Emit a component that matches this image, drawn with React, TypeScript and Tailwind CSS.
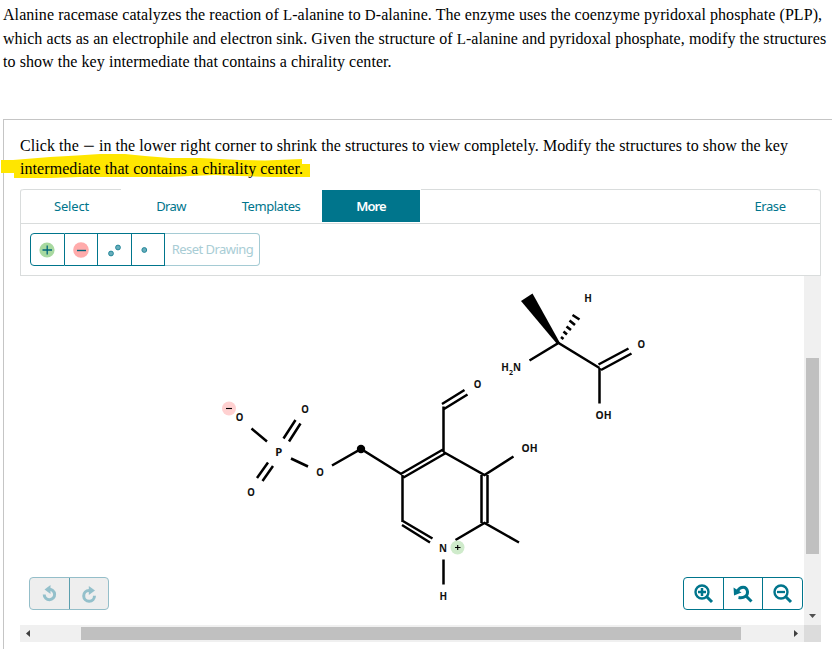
import React from "react";

const tabs = [
  { name: "Select", box: "w-[100px]", tone: "text-[#00758c] border-t border-[#d9dcdc] tracking-[-0.15px] rounded-tl-[3px] pl-[1px]" },
  { name: "Draw", box: "w-[100px]", tone: "text-[#00758c] pt-[1px] tracking-[-0.6px]" },
  { name: "Templates", box: "w-[100px]", tone: "text-[#00758c] pt-[1px] tracking-[-0.45px]" },
];

function SmallCap({ children }: { children: string }) {
  return <span className="text-[15px] leading-none">{children}</span>;
}

function Header() {
  return (
    <p className="h-[119px] pt-[3px] pl-[3px] text-[16px] leading-[23.5px] tracking-[0.063px] whitespace-nowrap">
      <span className="block">
        Alanine racemase catalyzes the reaction of <SmallCap>L</SmallCap>-alanine to <SmallCap>D</SmallCap>
        -alanine. The enzyme uses the coenzyme pyridoxal phosphate (PLP),
      </span>
      <span className="block">
        which acts as an electrophile and electron sink. Given the structure of <SmallCap>L</SmallCap>
        -alanine and pyridoxal phosphate, modify the structures
      </span>
      <span className="block">to show the key intermediate that contains a chirality center.</span>
    </p>
  );
}

function Highlight() {
  return (
    <svg className="absolute -left-[4px] top-[30px] -z-10" width="320" height="30" viewBox="0 150 320 30">
      <path
        fill="#ffe600"
        d="M1 160H13L50 157L77 155.5L100 154H125L145 156L170 158H200L240 160L265 160.5L302 159V164H310V177L270 177L240 176L215 175L190 176L170 177H80L50 178H14V173H1Z"
      />
    </svg>
  );
}

function Toolbar() {
  return (
    <div className="h-[87px] w-[801px]">
      <div className="flex h-[35px] rounded-t-[3px] border-x border-b border-[#d9dcdc] text-[13px]">
        {tabs.map((t) => (
          <div key={t.name} className={`flex items-center justify-center ${t.box} ${t.tone}`}>
            {t.name}
          </div>
        ))}
        <div className="mt-[1px] ml-[1px] flex h-[32px] w-[98px] items-center justify-center bg-[#00758c] pt-[2px] font-semibold tracking-[-0.9px] text-white">
          More
        </div>
        <div className="ml-[1px] flex grow justify-end rounded-tr-[3px] border-t border-[#d9dcdc]">
          <div className="flex w-[100px] items-center justify-center tracking-[-0.4px] text-[#00758c]">Erase</div>
        </div>
      </div>
      <div className="flex h-[52px] border-x border-b border-[#d9dcdc] pt-[9px] pl-[9px]">
        <div className="flex h-[33px]">
          <Cell box="w-[35px] rounded-l-[4px] border-l">
            <circle cx="16" cy="16" r="7.6" fill="#a8d9a0" />
            <path d="M11.5 16H21M16.2 11.5V20.5" stroke="#00657a" strokeWidth="1.3" />
          </Cell>
          <Cell box="w-[33px]">
            <circle cx="16" cy="16" r="7.8" fill="#ffabab" />
            <path d="M12 16.5H21" stroke="#00657a" strokeWidth="1.4" />
          </Cell>
          <Cell box="w-[34px]">
            <circle cx="13" cy="19.5" r="2.4" fill="#67adbb" stroke="#24879a" />
            <circle cx="20" cy="13.5" r="2.4" fill="#67adbb" stroke="#24879a" />
          </Cell>
          <Cell box="w-[33px]">
            <circle cx="12.3" cy="16" r="2.4" fill="#67adbb" stroke="#24879a" />
          </Cell>
          <div className="flex w-[95px] items-center justify-center rounded-r-[4px] border-y border-r border-[#a5cbd4] pl-[1px] text-[13px] tracking-[-0.55px] whitespace-nowrap text-[#a9cdd5]">
            Reset Drawing
          </div>
        </div>
      </div>
    </div>
  );
}

function Cell({ box, children }: { box: string; children: React.ReactNode }) {
  return (
    <div className={`border-y border-r border-[#00758c] ${box}`}>
      <svg width="32" height="31" viewBox="0 0 32 31">
        {children}
      </svg>
    </div>
  );
}

const bonds =
  "M529.5 360.5L558.5 343L599.5 368M598.5 364.5L628.5 348.5M601 370L631.5 353.5M599.5 368V403.5" +
  "M251.5 428.5L267 441.5M283.5 438.5L295.5 420M289 441.5L300.5 423.5M257 478L268 462.5M262.5 481L273 466M291 458.5L308 466.5" +
  "M332 465.5L361 449L402 474.5M401.5 473.5L443 449.5M403.5 477.5L445 453.5M443.5 452V406.5M442 404L464.5 390M444 409L467.5 394.5" +
  "M443.5 452L484.5 475L513.5 456.5M481.5 475V523M487.5 475V523M402.5 475V522M402 520.5L432.5 538.5M402 525L430 542.5" +
  "M455.5 540L484.5 523L519 542.5M443.5 559.5V584.5";

const atoms: [string, number, number, number][] = [
  ["H", 588, 302, 7.6], ["O", 641.2, 348, 7.6], ["OH", 603.5, 419, 16], ["O", 477.5, 388, 7.6],
  ["OH", 529.5, 452, 16], ["O", 239.5, 420.5, 7.6], ["O", 305, 412.5, 7.6], ["P", 278.8, 456, 7],
  ["O", 320, 475.5, 7.6], ["O", 251, 495.5, 7.6], ["N", 443, 551.5, 8], ["H", 443.3, 600, 7.6],
];

function Molecule() {
  return (
    <svg width="784" height="349" viewBox="20 276 784 349" className="block">
      <path d={bonds} fill="none" stroke="#000" strokeWidth="2.5" />
      <path d="M521 301L532.5 293.5L560 343L557.5 344.5Z" />
      <path
        d="M561 337L563.5 339M563.5 331.5L567 334.5M566.5 326.5L571 330M569.5 320.5L575 325M572.5 315L579.5 319.5"
        stroke="#000"
        strokeWidth="2.6"
      />
      <circle cx="361" cy="449" r="4.2" />
      <circle cx="229" cy="408.5" r="7" fill="#ffd1d1" />
      <path d="M226 408.5H232" stroke="#000" strokeWidth="1.1" />
      <circle cx="457.5" cy="547.5" r="7" fill="#cfebcb" />
      <path d="M455 547.5H460.5M457.7 545V550" stroke="#000" strokeWidth="1.1" />
      <g fontSize="11" textAnchor="middle" fontWeight="700" fill="#111">
        {atoms.map(([label, x, y, w]) => (
          <text key={`${x}-${y}`} x={x} y={y} textLength={w} lengthAdjust="spacingAndGlyphs">
            {label}
          </text>
        ))}
        <text x="505" y="371" textLength="7.6" lengthAdjust="spacingAndGlyphs">H</text>
        <text x="511" y="374.5" fontSize="7.5" textLength="4" lengthAdjust="spacingAndGlyphs">2</text>
        <text x="517" y="371" textLength="8" lengthAdjust="spacingAndGlyphs">N</text>
      </g>
    </svg>
  );
}

function HistoryButtons() {
  return (
    <div className="absolute left-[9px] top-[301px] flex h-[33px] w-[80px] rounded-[4px] border border-[#94bec9] bg-[#eeeeee]">
      <div className="w-[40px] border-r border-[#5b9fae]">
        <svg width="39" height="31" viewBox="0 0 39 31">
          <path d="M14.2 16.5A5.2 5.2 0 1 0 19 11.3" fill="none" stroke="#94c0cb" strokeWidth="3" />
          <path d="M14.5 11.5L20.5 7V16Z" fill="#94c0cb" />
        </svg>
      </div>
      <svg width="38" height="31" viewBox="0 0 38 31">
        <path d="M24.5 17.8A5.4 5.4 0 1 1 19 12.5" fill="none" stroke="#94c0cb" strokeWidth="3" />
        <path d="M25 12.5L18.8 8V17Z" fill="#94c0cb" />
      </svg>
    </div>
  );
}

function ZoomButtons() {
  return (
    <div className="absolute left-[663px] top-[301px] flex h-[33px] w-[120px] rounded-[4px] border border-[#00758c] bg-white text-[#00758c]">
      <div className="w-[40px] border-r border-[#00758c]">
        <svg width="39" height="31" viewBox="0 0 39 31" fill="none" stroke="currentColor">
          <circle cx="18" cy="14" r="6.5" strokeWidth="2.4" />
          <path d="M14 14H22M18 10V18" strokeWidth="2.5" />
          <path d="M22.5 18.5L28 24" strokeWidth="3" />
        </svg>
      </div>
      <div className="w-[39px] border-r border-[#00758c]">
        <svg width="38" height="31" viewBox="0 0 38 31" fill="none" stroke="currentColor">
          <path d="M13.5 13C16 8 22.5 7.5 23.5 13.5C24 18 20 20.5 14.5 19.5" strokeWidth="3" />
          <path d="M22 18L27.5 23.5" strokeWidth="3" />
          <path d="M9.5 9.5L17.5 14.5L10 17.5Z" fill="currentColor" stroke="none" />
        </svg>
      </div>
      <svg width="39" height="31" viewBox="0 0 39 31" fill="none" stroke="currentColor">
        <circle cx="18" cy="14" r="6.5" strokeWidth="2.4" />
        <path d="M14 14H22" strokeWidth="2.3" />
        <path d="M22.5 18.5L28 24" strokeWidth="3" />
      </svg>
    </div>
  );
}

export default function App() {
  return (
    <div className="h-[649px] w-[832px] overflow-hidden bg-white font-['Liberation_Serif',serif] text-black">
      <Header />
      <main className="ml-[3px] h-[530px] border-l border-t border-[#c5c5c5] pl-[16px] pt-[14px]">
        <div className="relative isolate h-[55px] text-[16px] leading-[23px] tracking-[0.067px] whitespace-nowrap">
          <div className="absolute -left-[16px] -top-[14px]">
            <Highlight />
          </div>
          <p>
            Click the <span className="relative top-[2px] text-[21px] leading-none">−</span> in the lower right corner to shrink the structures to view completely. Modify the structures to show the key
          </p>
          <p>intermediate that contains a chirality center.</p>
        </div>
        <div className="font-['Noto_Sans',sans-serif]">
          <Toolbar />
          <div className="relative grid w-[801px] grid-cols-[784px_17px] grid-rows-[349px_17px]">
            <Molecule />
            <div className="flex flex-col items-center bg-[#f0f0f0] pt-[82px]">
              <div className="h-[196px] w-[13px] bg-[#c0c0c0]" />
              <svg className="mt-[59px]" width="9" height="6" viewBox="0 0 9 6">
                <path d="M1 1H8L4.5 5Z" fill="#505050" />
              </svg>
            </div>
            <div className="flex items-center bg-[#f0f0f0] pl-[5px]">
              <svg width="6" height="9" viewBox="0 0 6 9">
                <path d="M5 1V8L1 4.5Z" fill="#404040" />
              </svg>
              <div className="ml-[50px] h-[13px] w-[660px] bg-[#c0c0c0]" />
              <svg className="ml-[52px]" width="6" height="9" viewBox="0 0 6 9">
                <path d="M1 1V8L5 4.5Z" fill="#404040" />
              </svg>
            </div>
            <div className="bg-[#dcdcdc]" />
            <HistoryButtons />
            <ZoomButtons />
          </div>
        </div>
      </main>
    </div>
  );
}
